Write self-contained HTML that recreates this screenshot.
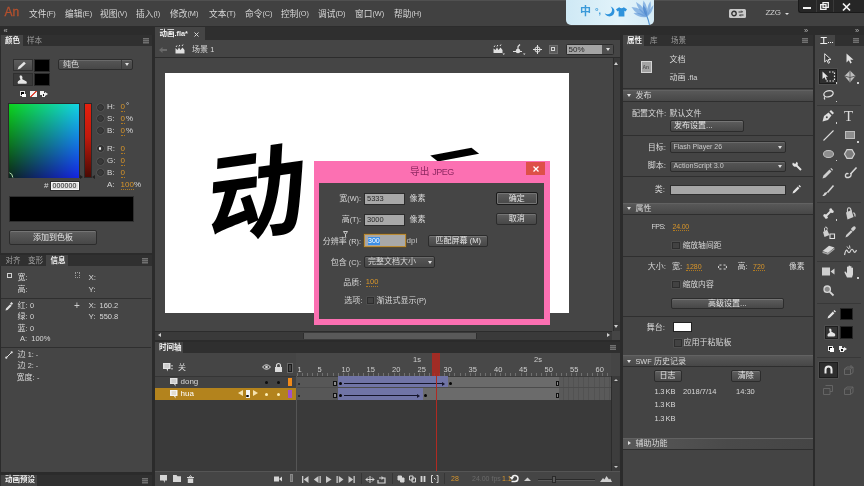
<!DOCTYPE html>
<html lang="zh-CN">
<head>
<meta charset="utf-8">
<title>Animate - 动画.fla</title>
<style>
*{box-sizing:border-box;margin:0;padding:0}
html,body{width:864px;height:486px;overflow:hidden;background:#2b2b2b}
body{position:relative;font-family:"Liberation Sans","Noto Sans CJK SC",sans-serif;font-size:9px;color:#dcdcdc;line-height:1}
.a{position:absolute}
.t{position:absolute;white-space:nowrap;line-height:12px;height:12px;font-size:8.7px;color:#d8d8d8}
.t i{font-style:normal;font-size:7.3px}
.or{color:#d9962a}
.ul{border-bottom:1px dotted #b07a22}
.pn{background:#454545}
.hd{position:absolute;left:622.5px;width:190.5px;height:12.2px;background:linear-gradient(#585858,#474747);border-top:1px solid #626262;border-bottom:1px solid #2e2e2e}
.sep{position:absolute;height:1px;background:#2f2f2f}
.btn{position:absolute;background:linear-gradient(#5e5e5e,#474747);border:1px solid #2c2c2c;border-radius:2px;box-shadow:inset 0 1px 0 #757575;text-align:center;color:#e4e4e4;font-size:8px;line-height:10px}
.sel{position:absolute;background:linear-gradient(#565656,#474747);border:1px solid #2c2c2c;border-radius:2px;box-shadow:inset 0 1px 0 #6a6a6a}
.chk{position:absolute;width:7.5px;height:7.5px;background:#424242;border:1px solid #2e2e2e;box-shadow:0 0 0 0.5px #585858}
.dn{position:absolute;width:0;height:0;border-left:3px solid transparent;border-right:3px solid transparent;border-top:4px solid #e0e0e0}
.rt{position:absolute;width:0;height:0;border-top:3px solid transparent;border-bottom:3px solid transparent;border-left:4px solid #e0e0e0}
.rad{position:absolute;width:7px;height:7px;border-radius:50%;background:#3a3a3a;border:1px solid #2c2c2c;box-shadow:0 0 0 0.5px #595959}
svg{position:absolute;overflow:visible}
</style>
</head>
<body>
<div id="root" style="position:absolute;left:0;top:0;width:864px;height:486px;will-change:transform">

<!-- ===== MENU BAR ===== -->
<div class="a" id="menubar" style="left:0;top:0;width:864px;height:25.5px;background:#414141;border-top:1px solid #505050"></div>
<div class="a" style="left:4.5px;top:5px;font-size:12px;line-height:14px;color:#b5502d;letter-spacing:0.1px;-webkit-text-stroke:0.3px #b5502d">An</div>
<div class="t" style="left:29px;top:7.5px">文件<i style="position:relative;top:-1px">(F)</i></div>
<div class="t" style="left:65px;top:7.5px">编辑<i style="position:relative;top:-1px">(E)</i></div>
<div class="t" style="left:100px;top:7.5px">视图<i style="position:relative;top:-1px">(V)</i></div>
<div class="t" style="left:136px;top:7.5px">插入<i style="position:relative;top:-1px">(I)</i></div>
<div class="t" style="left:170px;top:7.5px">修改<i style="position:relative;top:-1px">(M)</i></div>
<div class="t" style="left:209px;top:7.5px">文本<i style="position:relative;top:-1px">(T)</i></div>
<div class="t" style="left:245px;top:7.5px">命令<i style="position:relative;top:-1px">(C)</i></div>
<div class="t" style="left:281px;top:7.5px">控制<i style="position:relative;top:-1px">(O)</i></div>
<div class="t" style="left:318px;top:7.5px">调试<i style="position:relative;top:-1px">(D)</i></div>
<div class="t" style="left:355px;top:7.5px">窗口<i style="position:relative;top:-1px">(W)</i></div>
<div class="t" style="left:394px;top:7.5px">帮助<i style="position:relative;top:-1px">(H)</i></div>

<!-- IME floating bar -->
<div class="a" style="left:566px;top:0;width:88px;height:25px;background:linear-gradient(90deg,#cfe9f5,#e2f3fa 60%,#d5ebf6);border-radius:0 0 5px 5px;overflow:hidden">
  <div class="a" style="left:14px;top:5px;font-size:11px;line-height:12px;color:#3b9ad9;font-weight:bold">中</div>
  <div class="a" style="left:29px;top:6px;font-size:9px;line-height:10px;color:#3b9ad9;font-weight:bold">°,</div>
  <svg style="left:38px;top:6px" width="10" height="11" viewBox="0 0 10 11"><path d="M6.5 0.5A5 5 0 1 1 0.8 7.2A4 4 0 0 0 6.5 0.5z" fill="#2f93dc"/></svg>
  <svg style="left:50px;top:7px" width="11" height="10" viewBox="0 0 11 10"><path d="M0 2.2L3.2 0.3Q5.5 2 7.8 0.3L11 2.2L9.6 4.4L8.4 3.8V9.6H2.6V3.8L1.4 4.4z" fill="#2f93dc"/></svg>
  <svg style="left:64px;top:0" width="24" height="25" viewBox="0 0 24 25">
    <g fill="#5b93d6" fill-opacity="0.62">
      <path d="M17 17Q6 15 1.500 7Q12 7 17 17z"/>
      <path d="M17 17Q8 11 6 2Q15 7 17 17z"/>
      <path d="M17 17Q11 8 13.500 0.500Q19 8 17 17z"/>
      <path d="M17 17Q16 8 20.500 1Q22 9 17 17z"/>
      <path d="M17 17Q19 9 23.500 5Q23 12 17 17z"/>
      <path d="M17 17Q8 18 3.500 13Q11 12 17 17z"/>
      <path d="M17 17Q12 11 13 5Q18 10 17 17z" fill="#3f7cc8"/>
    </g>
    <path d="M17 16.500Q18.500 20 19.500 25" stroke="#4c8fd0" stroke-width="1.100" fill="none"/>
  </svg>
</div>
<!-- workspace switcher -->
<div class="a" style="left:729px;top:8.5px;width:17px;height:9px;background:#c9c9c9;border-radius:1.5px"></div>
<svg style="left:731px;top:9.5px" width="14" height="7" viewBox="0 0 14 7"><circle cx="3" cy="3.5" r="2.2" fill="none" stroke="#333" stroke-width="1.4"/><path d="M7.5 2h4l-1.2-1.3M12.5 5h-4l1.2 1.3" stroke="#333" stroke-width="1" fill="none"/></svg>
<div class="t" style="left:765.5px;top:7px;font-size:8px;color:#cfcfcf;letter-spacing:-0.3px">ZZG</div>
<div class="dn" style="left:785px;top:13px;border-left-width:2px;border-right-width:2px;border-top-width:2.5px"></div>
<!-- window controls -->
<div class="a" style="left:798px;top:0;width:66px;height:12.5px;background:#262626;border-radius:0 0 0 3px;border-left:1px solid #1a1a1a;border-bottom:1px solid #1a1a1a"></div>
<div class="a" style="left:815.5px;top:0;width:1px;height:11.5px;background:#3a3a3a"></div>
<div class="a" style="left:833px;top:0;width:1px;height:11.5px;background:#3a3a3a"></div>
<div class="a" style="left:803px;top:7px;width:8px;height:2px;background:#f2f2f2"></div>
<svg style="left:820px;top:2px" width="9" height="8" viewBox="0 0 9 8"><path d="M3 0.7h5.3v4.6H3z M0.7 2.7H6v4.6H0.7z" fill="none" stroke="#f2f2f2" stroke-width="1.3"/></svg>
<svg style="left:842px;top:2.5px" width="9" height="8" viewBox="0 0 9 8"><path d="M1 0.5l7 7M8 0.5l-7 7" stroke="#f4f4f4" stroke-width="1.7"/></svg>

<!-- ===== LEFT PANEL ===== -->
<div class="a" style="left:0;top:25.5px;width:864px;height:9px;background:#2c2c2c"></div>
<div class="a" style="left:3.500px;top:26.500px;font-size:7.500px;line-height:7px;color:#b8b8b8">«</div>
<div class="a" style="left:0;top:34.5px;width:152px;height:11px;background:#303030"></div>
<div class="a pn" style="left:1px;top:34.5px;width:22px;height:12px"></div>
<div class="t" style="left:5px;top:35px;font-size:7.5px;color:#f0f0f0;font-weight:bold">颜色</div>
<div class="t" style="left:27px;top:35px;font-size:7.5px;color:#9c9c9c">样本</div>
<div class="a" style="left:142.5px;top:38px;width:6px;height:5.500px;background:repeating-linear-gradient(#707070 0 1px,#505050 1px 2px)"></div>
<div class="a pn" style="left:1px;top:45.5px;width:151px;height:207px"></div>

<!-- stroke / fill -->
<div class="a" style="left:13px;top:59.2px;width:19.5px;height:12.3px;background:linear-gradient(#5d5d5d,#4a4a4a);border:1px solid #303030"></div>
<svg style="left:17px;top:61px" width="10" height="9" viewBox="0 0 10 9"><path d="M0.6 8.4l1-2.6L7 0.8l1.8 1.8L3.4 7.6z" fill="#e6e6e6"/></svg>
<div class="a" style="left:33.8px;top:59.2px;width:16.5px;height:12.5px;background:#000;border:1px solid #2a2a2a"></div>
<div class="a" style="left:13px;top:73.3px;width:19.5px;height:13px;background:#3a3a3a;border:1px solid #303030"></div>
<svg style="left:17px;top:75px" width="11" height="9" viewBox="0 0 11 9"><path d="M3 0.5C5.5-0.3 6 3 5 4L9.5 6.5Q10.5 8.8 8.5 8.8H1.2Q0 8.5 1 6.2L3.5 4.5C3 3 2 1.5 3 0.5z" fill="#e6e6e6"/></svg>
<div class="a" style="left:33.8px;top:73.3px;width:16.5px;height:13px;background:#000;border:1px solid #2a2a2a"></div>
<div class="a" style="left:19.5px;top:91px;width:5px;height:5px;background:#000;border:1px solid #e8e8e8"></div>
<div class="a" style="left:22px;top:93.5px;width:3.5px;height:3.5px;background:#fff"></div>
<div class="a" style="left:30px;top:90.5px;width:6.5px;height:6.5px;background:linear-gradient(135deg,#f4f4f4 43%,#e04a3a 43% 57%,#f4f4f4 57%)"></div>
<div class="a" style="left:40px;top:90.5px;width:3.5px;height:4px;background:#f2f2f2"></div>
<div class="a" style="left:41.5px;top:93px;width:3.5px;height:4px;background:#1a1a1a;border:0.5px solid #f2f2f2"></div>
<div class="rt" style="left:45px;top:91.5px;border-left-color:#f2f2f2;border-top-width:2.5px;border-bottom-width:2.5px;border-left-width:3px"></div>
<!-- select -->
<div class="sel" style="left:58.3px;top:58.7px;width:75px;height:11.8px"></div>
<div class="t" style="left:63px;top:58.800px;font-size:8px">纯色</div>
<div class="a" style="left:121px;top:59.5px;width:1px;height:9.5px;background:#3a3a3a"></div>
<div class="dn" style="left:124.5px;top:63px;border-left-width:2.5px;border-right-width:2.5px;border-top-width:3.5px"></div>

<!-- colour field -->
<div class="a" style="left:8px;top:103px;width:71.5px;height:75px;background:#2a2a2a"></div>
<div class="a" id="cf" style="left:8.5px;top:103.5px;width:70.5px;height:74px;background:linear-gradient(to right,rgb(12,0,28),rgb(20,0,228));"></div>
<div class="a" style="left:8.5px;top:103.5px;width:70.5px;height:74px;background:linear-gradient(to bottom,rgb(0,212,0),rgb(0,36,0));mix-blend-mode:screen"></div>
<svg style="left:9px;top:172px" width="5" height="6" viewBox="0 0 5 6"><path d="M0.5 0.8Q3.5 1.5 3.8 5.5" stroke="#b7e0b0" stroke-width="1" fill="none"/></svg>
<div class="a" style="left:84px;top:103px;width:7.5px;height:75px;border:1px solid #2a2a2a;background:linear-gradient(to bottom,#e6200e,#c01a0c 45%,#4a0a04)"></div>
<div class="rt" style="left:80px;top:174.5px;border-left-color:#222;border-top-width:2.5px;border-bottom-width:2.5px;border-left-width:3px"></div>
<div class="a" style="left:91.5px;top:174.5px;width:0;height:0;border-top:2.5px solid transparent;border-bottom:2.5px solid transparent;border-right:3px solid #222"></div>

<!-- HSB / RGB -->
<div class="rad" style="left:96.5px;top:103.5px"></div>
<div class="rad" style="left:96.5px;top:115px"></div>
<div class="rad" style="left:96.5px;top:127px"></div>
<div class="rad" style="left:96.5px;top:145px"></div>
<div class="a" style="left:98.7px;top:147.2px;width:2.6px;height:2.6px;border-radius:50%;background:#f0f0f0"></div>
<div class="rad" style="left:96.5px;top:157.5px"></div>
<div class="rad" style="left:96.5px;top:169px"></div>
<div class="t" style="left:107px;top:101px;font-size:8px">H:</div>
<div class="t" style="left:107px;top:113px;font-size:8px">S:</div>
<div class="t" style="left:107px;top:125px;font-size:8px">B:</div>
<div class="t" style="left:107px;top:143px;font-size:8px">R:</div>
<div class="t" style="left:107px;top:155px;font-size:8px">G:</div>
<div class="t" style="left:107px;top:166.5px;font-size:8px">B:</div>
<div class="t or" style="left:120.5px;top:101px;font-size:8px"><span class="ul">0</span></div>
<div class="t or" style="left:120.5px;top:113px;font-size:8px"><span class="ul">0</span></div>
<div class="t or" style="left:120.5px;top:125px;font-size:8px"><span class="ul">0</span></div>
<div class="t or" style="left:120.5px;top:143px;font-size:8px"><span class="ul">0</span></div>
<div class="t or" style="left:120.5px;top:155px;font-size:8px"><span class="ul">0</span></div>
<div class="t or" style="left:120.5px;top:166.5px;font-size:8px"><span class="ul">0</span></div>
<div class="t" style="left:126px;top:100px;font-size:8px">°</div>
<div class="t" style="left:126px;top:113px;font-size:8px">%</div>
<div class="t" style="left:126px;top:125px;font-size:8px">%</div>
<div class="t" style="left:107px;top:179px;font-size:8px">A:</div>
<div class="t or" style="left:120.5px;top:179px;font-size:8px"><span class="ul">100</span></div>
<div class="t" style="left:134px;top:179px;font-size:8px">%</div>
<div class="t" style="left:44px;top:179.5px;font-size:8px">#</div>
<div class="a" style="left:51px;top:182px;width:28px;height:8px;background:#dedede;border:1px solid #f5f5f5;outline:0.5px solid #2a2a2a"></div>
<div class="t" style="left:52.5px;top:180px;font-size:7px;color:#222;letter-spacing:0.1px">000000</div>

<div class="a" style="left:9px;top:195.5px;width:125px;height:26px;background:#000;border:1px solid #2e2e2e"></div>
<div class="btn" style="left:9px;top:230px;width:88px;height:15px;line-height:13px">添加到色板</div>

<!-- info panel -->
<div class="a" style="left:0;top:254.5px;width:152px;height:11px;background:#303030"></div>
<div class="a pn" style="left:46px;top:254.5px;width:21.5px;height:12px"></div>
<div class="t" style="left:5.5px;top:255px;font-size:7.5px;color:#a2a2a2">对齐</div>
<div class="t" style="left:28px;top:255px;font-size:7.5px;color:#a2a2a2">变形</div>
<div class="t" style="left:50.5px;top:255px;font-size:7.5px;color:#f0f0f0;font-weight:bold">信息</div>
<div class="a" style="left:142px;top:258px;width:6px;height:5.500px;background:repeating-linear-gradient(#707070 0 1px,#505050 1px 2px)"></div>
<div class="a pn" style="left:1px;top:265.5px;width:151px;height:206.5px"></div>
<div class="a" style="left:6.5px;top:272.5px;width:5px;height:5px;border:1px solid #d0d0d0"></div>
<div class="t" style="left:17.5px;top:271.5px;font-size:8px">宽:</div>
<div class="t" style="left:17.5px;top:283.5px;font-size:8px">高:</div>
<div class="a" style="left:74.5px;top:272px;width:5px;height:5.5px;border:1px dotted #9a9a9a"></div>
<div class="t" style="left:88.5px;top:271.5px;font-size:8px">X:</div>
<div class="t" style="left:88.5px;top:283.5px;font-size:8px">Y:</div>
<div class="sep" style="left:1px;top:298px;width:150px"></div>
<svg style="left:5px;top:301.5px" width="8" height="9" viewBox="0 0 8 9"><path d="M0.5 8.5L1 6.5L5.2 2.3L6.7 3.8L2.5 8z M5 1.5L6.5 0L8 1.5L6.8 3z" fill="#e0e0e0"/></svg>
<div class="t" style="left:17.5px;top:300px;font-size:8px">红: <i>0</i></div>
<div class="t" style="left:17.5px;top:311px;font-size:8px">绿: <i>0</i></div>
<div class="t" style="left:17.5px;top:323px;font-size:8px">蓝: <i>0</i></div>
<div class="t" style="left:20px;top:333px;font-size:7.5px">A:&nbsp; 100%</div>
<div class="t" style="left:74px;top:300px;font-size:10px;color:#cfcfcf">+</div>
<div class="t" style="left:88.5px;top:300px;font-size:8px">X:</div>
<div class="t" style="left:99.5px;top:300px;font-size:7.5px">160.2</div>
<div class="t" style="left:88.5px;top:311px;font-size:8px">Y:</div>
<div class="t" style="left:99.5px;top:311px;font-size:7.5px">550.8</div>
<div class="sep" style="left:1px;top:347px;width:150px"></div>
<svg style="left:5px;top:350.5px" width="8" height="8" viewBox="0 0 8 8"><path d="M1 7L7 1" stroke="#e0e0e0" stroke-width="1"/><circle cx="1.3" cy="6.7" r="1.1" fill="#e0e0e0"/><circle cx="6.7" cy="1.3" r="1.1" fill="#e0e0e0"/></svg>
<div class="t" style="left:17.5px;top:349px;font-size:8px">边 <i>1: -</i></div>
<div class="t" style="left:17.5px;top:360px;font-size:8px">边 <i>2: -</i></div>
<div class="t" style="left:16.5px;top:371.5px;font-size:8px">宽度: <i>-</i></div>

<div class="a" style="left:0;top:474.5px;width:152px;height:11.5px;background:#303030"></div>
<div class="a pn" style="left:1px;top:474.5px;width:35.5px;height:11.5px"></div>
<div class="t" style="left:5px;top:474px;font-size:7.5px;color:#f0f0f0;font-weight:bold">动画预设</div>
<div class="a" style="left:142px;top:478px;width:6px;height:5.500px;background:repeating-linear-gradient(#707070 0 1px,#505050 1px 2px)"></div>

<!-- ===== DOCUMENT AREA ===== -->
<div class="a" style="left:155px;top:27px;width:465px;height:12.5px;background:#2f2f2f"></div>
<div class="a pn" style="left:155px;top:27px;width:49.5px;height:13px"></div>
<div class="t" style="left:159.5px;top:28px;font-size:7.5px;color:#f2f2f2;font-weight:bold">动画<i>.fla*</i></div>
<svg style="left:193.5px;top:31.5px" width="5" height="5" viewBox="0 0 5 5"><path d="M0.5 0.5l4 4M4.5 0.5l-4 4" stroke="#d8d8d8" stroke-width="1"/></svg>
<div class="a pn" style="left:155px;top:39.5px;width:465px;height:17.5px"></div>
<svg style="left:158.5px;top:47px" width="8" height="6" viewBox="0 0 8 6"><path d="M0 3L3.5 0V2H8V4H3.5V6z" fill="#6a6a6a"/></svg>
<svg style="left:175px;top:44px" width="10" height="10" viewBox="0 0 10 10"><path d="M0.5 9.5V4l2 2 1.5-2.5L5.5 6 7.5 3.5 9.5 6V9.5z" fill="#e0e0e0"/><path d="M1 3l1-1.5M4 2.5l0.8-1.5M7 2l1-1.5" stroke="#e0e0e0" stroke-width="1"/></svg>
<div class="t" style="left:192px;top:44px;font-size:8px">场景 <i>1</i></div>
<!-- right icons -->
<svg style="left:492.5px;top:43.5px" width="12" height="11" viewBox="0 0 12 11"><path d="M0.5 9V4.5l2 1.5 1.5-2.5L5.5 6 7.5 3.5 9.5 6V9z" fill="#e0e0e0"/><path d="M1 3l1-1.5M4 2.5l0.8-1.5M7 2l1-1.5" stroke="#e0e0e0" stroke-width="1"/><path d="M9.5 9.5h2.5l-1.25 1.5z" fill="#e0e0e0"/></svg>
<svg style="left:512.5px;top:43.5px" width="13" height="11" viewBox="0 0 13 11"><path d="M0 7.5h9M5 7.5V2.5L7 0.5" stroke="#e0e0e0" stroke-width="1.2" fill="none"/><circle cx="5" cy="7" r="2.3" fill="#e0e0e0"/><path d="M10 9.5h2.5l-1.25 1.5z" fill="#e0e0e0"/></svg>
<svg style="left:533px;top:44.5px" width="9" height="9" viewBox="0 0 9 9"><circle cx="4.5" cy="4.5" r="2.6" fill="none" stroke="#e0e0e0" stroke-width="1"/><path d="M4.5 0v9M0 4.5h9" stroke="#e0e0e0" stroke-width="1"/></svg>
<div class="a" style="left:548.5px;top:44.5px;width:9px;height:9px;background:#5a5a5a;border:1px solid #6e6e6e"></div>
<div class="a" style="left:551px;top:47px;width:4px;height:4px;border:1px solid #d6d6d6"></div>
<div class="a" style="left:566px;top:44px;width:48px;height:10.5px;background:#4e4e4e;border:1px solid #2c2c2c;border-radius:1.5px"></div>
<div class="a" style="left:567px;top:45px;width:35px;height:8.5px;background:#a4a4a4"></div>
<div class="t" style="left:568.5px;top:43.5px;font-size:8px;color:#2a2a2a">50%</div>
<div class="dn" style="left:605.5px;top:47.5px;border-left-width:2.5px;border-right-width:2.5px;border-top-width:3.5px"></div>

<!-- pasteboard -->
<div class="a" style="left:155px;top:57px;width:465px;height:1px;background:#2c2c2c"></div>
<div class="a" style="left:155px;top:58px;width:457.5px;height:273px;background:#454545"></div>
<div class="a" id="stage" style="left:164.5px;top:73px;width:404px;height:239.5px;background:#fff"></div>
<div class="a" id="dong" style="left:205px;top:135.5px;width:104px;height:120px;font-family:'Liberation Sans','Noto Sans CJK SC',sans-serif;font-weight:700;font-size:93px;line-height:120px;color:#000;text-align:center;transform:matrix(1.06,-0.148,-0.05,1.09,0,0);transform-origin:50% 50%">动</div>
<div class="a" style="left:400px;top:73px;width:168.5px;height:88.4px;overflow:hidden;clip-path:polygon(0 0,168.5px 0,168.5px 64.6px,0 96.3px)"><div class="a" id="hua" style="left:23.4px;top:80.2px;width:47px;height:47px;font-family:'Liberation Sans','Noto Sans CJK SC',sans-serif;font-weight:700;font-size:47px;line-height:47px;color:#000;transform:matrix(1,-0.188,1.46,1.1,0,0);transform-origin:0 0">画</div></div>

<!-- v scrollbar -->
<div class="a" style="left:612.5px;top:58px;width:7.5px;height:273px;background:#3a3a3a;border-left:1px solid #2c2c2c"></div>
<div class="a" style="left:613.5px;top:67px;width:6px;height:255px;background:#3d3d3d"></div>
<div class="a" style="left:614px;top:61.5px;width:0;height:0;border-left:2.2px solid transparent;border-right:2.2px solid transparent;border-bottom:3px solid #d0d0d0"></div>
<div class="a" style="left:614px;top:325px;width:0;height:0;border-left:2.2px solid transparent;border-right:2.2px solid transparent;border-top:3px solid #d0d0d0"></div>
<!-- h scrollbar -->
<div class="a" style="left:155px;top:331px;width:465px;height:8.5px;background:#3a3a3a;border-top:1px solid #2c2c2c"></div>
<div class="a" style="left:303px;top:332.5px;width:174px;height:6px;background:#595959;border:1px solid #2e2e2e;border-width:0 1px"></div>
<div class="a" style="left:157.5px;top:333.2px;width:0;height:0;border-top:2.2px solid transparent;border-bottom:2.2px solid transparent;border-right:3px solid #d0d0d0"></div>
<div class="a" style="left:607px;top:333.2px;width:0;height:0;border-top:2.2px solid transparent;border-bottom:2.2px solid transparent;border-left:3px solid #d0d0d0"></div>
<div class="a pn" style="left:612px;top:331px;width:8px;height:8.5px"></div>

<!-- ===== TIMELINE ===== -->
<div class="a" style="left:155px;top:341.5px;width:465px;height:11px;background:#2f2f2f"></div>
<div class="a pn" style="left:155px;top:341.5px;width:27.5px;height:11.5px"></div>
<div class="t" style="left:159px;top:341.8px;font-size:7.5px;color:#f0f0f0;font-weight:bold">时间轴</div>
<div class="a" style="left:610px;top:344.5px;width:6px;height:5px;background:repeating-linear-gradient(#707070 0 1px,#505050 1px 2px)"></div>
<!-- layer header + rows -->
<div class="a pn" style="left:155px;top:352.5px;width:141px;height:23.5px"></div>
<div class="a" style="left:155px;top:376px;width:141px;height:11.5px;background:#424242;border-top:1px solid #353535"></div>
<div class="a" style="left:155px;top:387.5px;width:141px;height:12px;background:#b3831d"></div>
<div class="a" style="left:155px;top:399.5px;width:141px;height:71px;background:#3a3a3a"></div>
<!-- header icons -->
<svg style="left:162.5px;top:363.300px" width="11" height="10" viewBox="0 0 11 10"><path d="M0 0h7.5v6H5V8.500L3.5 6H0z" fill="#e2e2e2"/><path d="M9 2v1.500M9 5v1.500" stroke="#dadada" stroke-width="1.200"/><path d="M1.500 2h4.500M1.500 4h4.500" stroke="#8c8c8c" stroke-width="0.500"/></svg>
<div class="t" style="left:178px;top:362px;font-size:8px">关</div>
<svg style="left:261.5px;top:363.5px" width="9" height="6" viewBox="0 0 9 6"><path d="M0.5 3Q4.5-1.5 8.500 3Q4.5 7.500 0.5 3z" fill="none" stroke="#dadada" stroke-width="1"/><circle cx="4.5" cy="3" r="1.3" fill="#dadada"/></svg>
<svg style="left:274.5px;top:362.800px" width="7" height="9" viewBox="0 0 7 9"><rect x="0" y="4" width="7" height="5" fill="#dadada"/><path d="M1.5 4V2.5a2 2 0 0 1 4 0V4" fill="none" stroke="#dadada" stroke-width="1.2"/></svg>
<div class="a" style="left:288px;top:364px;width:3.5px;height:7.5px;border:1px solid #1c1c1c;outline:0.5px solid #666"></div>
<!-- dong row -->
<svg style="left:170px;top:377.5px" width="8" height="9" viewBox="0 0 8 9"><path d="M0 0h7.500v6H5.500V8.500L4 6H0z" fill="#e2e2e2"/><path d="M1.500 2h4.500M1.500 4h4.500" stroke="#8c8c8c" stroke-width="0.500"/></svg>
<div class="t" style="left:180.5px;top:376px;font-size:8px">dong</div>
<div class="a" style="left:264.5px;top:380.5px;width:3px;height:3px;border-radius:50%;background:#0d0d0d"></div>
<div class="a" style="left:276.5px;top:380.5px;width:3px;height:3px;border-radius:50%;background:#0d0d0d"></div>
<div class="a" style="left:288px;top:378px;width:3.5px;height:7.5px;background:#f08a1a"></div>
<!-- hua row -->
<svg style="left:170px;top:389.5px" width="8" height="9" viewBox="0 0 8 9"><path d="M0 0h7.500v6H5.500V8.500L4 6H0z" fill="#f4f4f4"/><path d="M1.500 2h4.500M1.500 4h4.500" stroke="#b09a60" stroke-width="0.500"/></svg>
<div class="t" style="left:180.5px;top:388px;font-size:8px;color:#fff">hua</div>
<div class="a" style="left:237.5px;top:390.3px;width:0;height:0;border-top:3.4px solid transparent;border-bottom:3.4px solid transparent;border-right:5px solid #f6e3b0"></div>
<div class="a" style="left:245.5px;top:390px;width:4px;height:8px;background:#f4f4f4"></div>
<div class="a" style="left:246.3px;top:394.5px;width:2.4px;height:2.4px;border-radius:50%;background:#111"></div>
<div class="a" style="left:252.5px;top:390.3px;width:0;height:0;border-top:3.4px solid transparent;border-bottom:3.4px solid transparent;border-left:5px solid #f6e3b0"></div>
<div class="a" style="left:264.5px;top:392.5px;width:3px;height:3px;border-radius:50%;background:#fdf0b8"></div>
<div class="a" style="left:276.5px;top:392.5px;width:3px;height:3px;border-radius:50%;background:#fdf0b8"></div>
<div class="a" style="left:288px;top:390px;width:3.5px;height:7.5px;background:#a052c8"></div>

<!-- frames -->
<div class="a" style="left:296px;top:352.5px;width:315px;height:23px;background:#484848"></div>
<div class="a" id="ticks" style="left:296.5px;top:373px;width:314px;height:2.5px;background:repeating-linear-gradient(90deg,#707070 0 1px,transparent 1px 5.08px)"></div>
<div class="a" style="left:296px;top:375.5px;width:315px;height:24px;background:#5a5a5a"></div>
<div class="a" style="left:296px;top:375.5px;width:262.5px;height:24px;background:#6b6b6b"></div>
<div class="a" style="left:296px;top:375.5px;width:41.500px;height:24px;background:#575757"></div>
<div class="a" style="left:558.5px;top:375.5px;width:52.5px;height:24px;background:repeating-linear-gradient(90deg,transparent 0 4.08px,#525252 4.08px 5.08px)"></div>
<div class="a" style="left:296px;top:387px;width:315px;height:1px;background:#4c4c4c"></div>
<div class="a" style="left:296px;top:375.5px;width:315px;height:0.8px;background:#3c3c3c"></div>
<div class="a" style="left:296px;top:399.5px;width:315px;height:71px;background:#3a3a3a"></div>
<!-- tweens -->
<div class="a" style="left:337.5px;top:376px;width:110px;height:11px;background:#7074a6"></div>
<div class="a" style="left:337.5px;top:388px;width:85.5px;height:11.5px;background:#7074a6"></div>
<div class="a" style="left:344px;top:383.2px;width:99px;height:1px;background:#15152a"></div>
<div class="a" style="left:442px;top:381.7px;width:0;height:0;border-top:2px solid transparent;border-bottom:2px solid transparent;border-left:3px solid #15152a"></div>
<div class="a" style="left:344px;top:395.3px;width:74px;height:1px;background:#15152a"></div>
<div class="a" style="left:417px;top:393.800px;width:0;height:0;border-top:2px solid transparent;border-bottom:2px solid transparent;border-left:3px solid #15152a"></div>
<!-- keyframes -->
<div class="a" style="left:297.6px;top:382.5px;width:2.6px;height:2.6px;border-radius:50%;border:0.7px solid #111"></div>
<div class="a" style="left:297.6px;top:394.500px;width:2.6px;height:2.6px;border-radius:50%;border:0.7px solid #111"></div>
<div class="a" style="left:333px;top:380.500px;width:3.6px;height:5.5px;border:0.9px solid #111;background:#8a8a8a"></div>
<div class="a" style="left:333px;top:392.500px;width:3.6px;height:5.5px;border:0.9px solid #111;background:#8a8a8a"></div>
<div class="a" style="left:338.5px;top:382.2px;width:3px;height:3px;border-radius:50%;background:#050505"></div>
<div class="a" style="left:338.5px;top:394.300px;width:3px;height:3px;border-radius:50%;background:#050505"></div>
<div class="a" style="left:449.3px;top:382.2px;width:3px;height:3px;border-radius:50%;background:#050505"></div>
<div class="a" style="left:424px;top:394.300px;width:3px;height:3px;border-radius:50%;background:#050505"></div>
<div class="a" style="left:555.5px;top:380.500px;width:3.6px;height:5.5px;border:0.9px solid #111;background:#8a8a8a"></div>
<div class="a" style="left:555.5px;top:392.500px;width:3.6px;height:5.5px;border:0.9px solid #111;background:#8a8a8a"></div>
<!-- frame numbers -->
<div class="t fn" style="left:297.5px;top:364px;font-size:7.5px;color:#cfcfcf">1</div>
<div class="t fn" style="left:317.5px;top:364px;font-size:7.5px;color:#cfcfcf">5</div>
<div class="t fn" style="left:341.5px;top:364px;font-size:7.5px;color:#cfcfcf">10</div>
<div class="t fn" style="left:366.5px;top:364px;font-size:7.5px;color:#cfcfcf">15</div>
<div class="t fn" style="left:392px;top:364px;font-size:7.5px;color:#cfcfcf">20</div>
<div class="t fn" style="left:417.5px;top:364px;font-size:7.5px;color:#cfcfcf">25</div>
<div class="t fn" style="left:443.5px;top:364px;font-size:7.5px;color:#cfcfcf">30</div>
<div class="t fn" style="left:468.5px;top:364px;font-size:7.5px;color:#cfcfcf">35</div>
<div class="t fn" style="left:494px;top:364px;font-size:7.5px;color:#cfcfcf">40</div>
<div class="t fn" style="left:519px;top:364px;font-size:7.5px;color:#cfcfcf">45</div>
<div class="t fn" style="left:544.5px;top:364px;font-size:7.5px;color:#cfcfcf">50</div>
<div class="t fn" style="left:570px;top:364px;font-size:7.5px;color:#cfcfcf">55</div>
<div class="t fn" style="left:595.5px;top:364px;font-size:7.5px;color:#cfcfcf">60</div>
<div class="t" style="left:413px;top:353.5px;font-size:7.5px;color:#cfcfcf">1s</div>
<div class="t" style="left:534px;top:353.5px;font-size:7.5px;color:#cfcfcf">2s</div>
<!-- playhead -->
<div class="a" style="left:432px;top:352.5px;width:8px;height:23px;background:rgba(176,40,32,0.85)"></div>
<div class="a" style="left:435.6px;top:375.5px;width:1px;height:95px;background:#b02a22"></div>
<!-- v divider + scrollbar -->
<div class="a" style="left:295.5px;top:375.5px;width:1px;height:110px;background:#555"></div>
<div class="a" style="left:611px;top:375.5px;width:9px;height:95px;background:#3a3a3a;border-left:1px solid #2c2c2c"></div>
<div class="a" style="left:612px;top:383px;width:7px;height:80px;background:#3d3d3d"></div>
<div class="a" style="left:613.5px;top:378.5px;width:0;height:0;border-left:2px solid transparent;border-right:2px solid transparent;border-bottom:2.6px solid #c8c8c8"></div>
<div class="a" style="left:613.5px;top:465.5px;width:0;height:0;border-left:2px solid transparent;border-right:2px solid transparent;border-top:2.6px solid #c8c8c8"></div>
<div class="a pn" style="left:611px;top:352.5px;width:9px;height:23px"></div>

<!-- bottom toolbar -->
<div class="a pn" style="left:155px;top:470.5px;width:465px;height:15.500px;border-top:1px solid #555"></div>
<svg style="left:160px;top:475px" width="7" height="8" viewBox="0 0 7 8"><path d="M0 0h7v5.5H4.800V8L3.500 5.500H0z" fill="#d6d6d6"/></svg>
<svg style="left:173px;top:475px" width="8" height="7" viewBox="0 0 8 7"><path d="M0 0h3.500l1 1.300H8V7H0z" fill="#d6d6d6"/></svg>
<svg style="left:186.500px;top:474.500px" width="7" height="8" viewBox="0 0 7 8"><path d="M0 2.500h7M2 2.500L3.500 0.500 5 2.500" stroke="#d6d6d6" stroke-width="1" fill="none"/><path d="M0.800 3.500h5.400v4.500H0.800z" fill="#d6d6d6"/></svg>
<svg style="left:273.500px;top:475.500px" width="8" height="6" viewBox="0 0 8 6"><path d="M0 0.500h5v5H0z M5 3L8 0.500v5z" fill="#d6d6d6"/></svg>
<div class="a" style="left:289.500px;top:474px;width:3px;height:8px;background:#6e6e6e;border:0.5px solid #888"></div>
<svg style="left:302px;top:475.500px" width="84" height="7" viewBox="0 0 84 7" fill="#c8c8c8">
 <path d="M0 0h1.300v7H0z M6.500 0v7L1.800 3.500z"/>
 <path d="M16.500 0v7L11.800 3.500z M17.500 0h1.300v7h-1.300z"/>
 <path d="M24 0l5.500 3.500L24 7z"/>
 <path d="M34.500 0h1.300v7h-1.300z M36.800 0l4.700 3.500-4.700 3.500z"/>
 <path d="M46.500 0l4.700 3.500-4.700 3.500z M51.500 0h1.300v7h-1.300z"/>
 <path d="M64 3.500h8M68 0v7M66 1.500l-2 2 2 2M70 1.500l2 2-2 2" stroke="#d6d6d6" stroke-width="1" fill="none"/>
 <path d="M77 2h6v5h-7V4" stroke="#d6d6d6" stroke-width="1.200" fill="none"/><path d="M79.500 0l2.500 2-2.500 2z"/>
</svg>
<div class="a" style="left:391.500px;top:473px;width:1px;height:11px;background:#363636"></div><div class="a" style="left:360.500px;top:473px;width:1px;height:11px;background:#363636"></div><div class="a" style="left:444px;top:473px;width:1px;height:11px;background:#363636"></div>
<svg style="left:397px;top:474.500px" width="42" height="8" viewBox="0 0 42 8" fill="none" stroke="#d6d6d6" stroke-width="1">
 <path d="M1 1h3.500v4H1z" fill="#d6d6d6"/><path d="M3.500 3h3.500v4H3.500z" fill="#d6d6d6"/>
 <path d="M12.500 1h3.500v4h-3.500z M15 3h3.500v4H15z"/>
 <path d="M24.500 1v6M27.500 1v6" stroke-width="1.800"/>
 <path d="M36 0.500h-1.500v7H36 M39.500 0.500H41v7h-1.500 M37 3l1.500 1.500"/>
</svg>
<div class="t or" style="left:451px;top:472.500px;font-size:7px">28</div>
<div class="t" style="left:472px;top:472.500px;font-size:7px;color:#6a6a6a">24.00 fps</div>
<div class="t or" style="left:502px;top:472.500px;font-size:7px">1.1</div>
<svg style="left:509px;top:473px" width="10" height="10" viewBox="0 0 10 10"><path d="M2.500 8.500h3.500a3 3 0 1 0-3-3.500" fill="none" stroke="#f0f0f0" stroke-width="1.500"/><path d="M0.500 4l2.500 3 2-3z" fill="#f0f0f0"/></svg>
<svg style="left:524px;top:477px" width="7" height="4" viewBox="0 0 7 4"><path d="M0 4L3.500 0.500 7 4z" fill="#cfcfcf"/></svg>
<div class="a" style="left:537.500px;top:478.500px;width:57px;height:2px;background:#2a2a2a;border-bottom:0.500px solid #5a5a5a"></div>
<div class="a" style="left:552px;top:476px;width:3.500px;height:7px;background:#5c5c5c;border:0.500px solid #2a2a2a"></div>
<svg style="left:600px;top:475.500px" width="12" height="6" viewBox="0 0 12 6"><path d="M0 6L3 2l1.500 1.500L6.500 0 9 3.500 10.200 2.500 12 6z" fill="#cfcfcf"/></svg>

<!-- ===== PROPERTIES PANEL ===== -->
<div class="a" style="left:804px;top:26.500px;font-size:7.500px;line-height:7px;color:#b8b8b8">»</div>
<div class="a" style="left:622.5px;top:34.5px;width:190.5px;height:11px;background:#303030"></div>
<div class="a pn" style="left:622.5px;top:34.5px;width:21.5px;height:12px"></div>
<div class="t" style="left:627px;top:35px;font-size:7.5px;color:#f0f0f0;font-weight:bold">属性</div>
<div class="t" style="left:650px;top:35px;font-size:7.5px;color:#9c9c9c">库</div>
<div class="t" style="left:671px;top:35px;font-size:7.5px;color:#9c9c9c">场景</div>
<div class="a" style="left:802px;top:37.5px;width:6px;height:5px;background:repeating-linear-gradient(#707070 0 1px,#505050 1px 2px)"></div>
<div class="a" style="left:622.5px;top:45.5px;width:190.5px;height:440.5px;background:#444444"></div>
<!-- doc -->
<div class="a" style="left:640.5px;top:61px;width:11.500px;height:11.500px;background:#a2a2a2;border:1px solid #d4d4d4"></div>
<div class="t" style="left:642.5px;top:61px;font-size:5px;color:#555;font-weight:bold">An</div>
<div class="t" style="left:669.5px;top:53.5px;font-size:8px">文档</div>
<div class="t" style="left:669.5px;top:71.500px;font-size:8px">动画<i> .fla</i></div>
<div class="sep" style="left:622.5px;top:87.500px;width:190.5px"></div>
<!-- publish -->
<div class="hd" style="top:89.5px"></div>
<div class="dn" style="left:626.500px;top:93.500px;border-left-width:2.800px;border-right-width:2.800px;border-top-width:3.500px"></div>
<div class="t" style="left:635.5px;top:90px;font-size:8px">发布</div>
<div class="t" style="left:632px;top:107.8px;font-size:8px">配置文件:</div>
<div class="t" style="left:669.5px;top:107.8px;font-size:8px">默认文件</div>
<div class="btn" style="left:670px;top:120px;width:74px;height:11.500px;text-align:left;padding-left:3px;font-size:8px;line-height:9.500px">发布设置...</div>
<div class="sep" style="left:622.5px;top:135px;width:190.5px"></div>
<div class="t" style="left:641px;top:141.500px;font-size:8px;width:25px;text-align:right">目标:</div>
<div class="sel" style="left:670px;top:141px;width:115.500px;height:11.500px"></div>
<div class="t" style="left:673.500px;top:140.500px;font-size:7px;color:#cacaca">Flash Player 26</div>
<div class="dn" style="left:777.500px;top:145.500px;border-left-width:2.500px;border-right-width:2.500px;border-top-width:3.500px"></div>
<div class="t" style="left:641px;top:160.300px;font-size:8px;width:25px;text-align:right">脚本:</div>
<div class="sel" style="left:670px;top:160.500px;width:115.500px;height:11.500px"></div>
<div class="t" style="left:673.500px;top:160px;font-size:7.2px;color:#cacaca">ActionScript 3.0</div>
<div class="dn" style="left:777.500px;top:165px;border-left-width:2.500px;border-right-width:2.500px;border-top-width:3.500px"></div>
<svg style="left:791.500px;top:161px" width="10" height="10" viewBox="0 0 10 10"><path d="M9 9L4.500 4.500" stroke="#e4e4e4" stroke-width="2"/><path d="M1 1.500A2.600 2.600 0 1 0 4.500 0.800L3.600 2.800 2 2.600z" fill="#e4e4e4"/></svg>
<div class="sep" style="left:622.5px;top:176px;width:190.5px"></div>
<div class="t" style="left:640px;top:183.500px;font-size:8px;width:25px;text-align:right">类:</div>
<div class="a" style="left:670px;top:184.500px;width:115.500px;height:10.500px;background:#a6a6a6;border:1px solid #2e2e2e"></div>
<svg style="left:792px;top:185px" width="9" height="9" viewBox="0 0 9 9"><path d="M0.500 8.500L1.200 6.200 5.800 1.600 7.400 3.200 2.800 7.800z M6.400 1L7.400 0 9 1.600 8 2.600z" fill="#e4e4e4"/></svg>
<!-- properties -->
<div class="hd" style="top:202.5px"></div>
<div class="dn" style="left:626.500px;top:207px;border-left-width:2.800px;border-right-width:2.800px;border-top-width:3.500px"></div>
<div class="t" style="left:635.5px;top:203.300px;font-size:8px">属性</div>
<div class="t" style="left:640px;top:221px;font-size:7px;letter-spacing:-0.5px;width:25px;text-align:right">FPS:</div>
<div class="t or" style="left:672.5px;top:220.500px;font-size:7px;letter-spacing:-0.2px"><span class="ul">24.00</span></div>
<div class="chk" style="left:672px;top:241.500px"></div>
<div class="t" style="left:682.5px;top:240px;font-size:7.8px">缩放轴间距</div>
<div class="sep" style="left:622.5px;top:256px;width:190.5px"></div>
<div class="t" style="left:641px;top:261.300px;font-size:8px;width:25px;text-align:right">大小:</div>
<div class="t" style="left:672px;top:261.300px;font-size:8px">宽:</div>
<div class="t or" style="left:686px;top:260.800px;font-size:7px"><span class="ul">1280</span></div>
<svg style="left:718px;top:263.500px" width="9" height="6" viewBox="0 0 9 6"><path d="M3.500 1H2.500a2 2 0 0 0 0 4H3.500M5.500 1H6.500a2 2 0 0 1 0 4H5.500" fill="none" stroke="#d6d6d6" stroke-width="1.100" stroke-dasharray="2 0.800"/></svg>
<div class="t" style="left:737.5px;top:261.300px;font-size:8px">高:</div>
<div class="t or" style="left:753px;top:260.800px;font-size:7px"><span class="ul">720</span></div>
<div class="t" style="left:789px;top:261.300px;font-size:7.800px">像素</div>
<div class="chk" style="left:672px;top:280.500px"></div>
<div class="t" style="left:682.5px;top:279px;font-size:7.8px">缩放内容</div>
<div class="btn" style="left:671px;top:297.5px;width:112.500px;height:11.500px;font-size:8px;line-height:9.500px">高级设置...</div>
<div class="sep" style="left:622.5px;top:316px;width:190.5px"></div>
<div class="t" style="left:640px;top:321.500px;font-size:8px;width:25px;text-align:right">舞台:</div>
<div class="a" style="left:673px;top:322px;width:18.500px;height:10px;background:#fff;border:1px solid #222"></div>
<div class="chk" style="left:674px;top:339px"></div>
<div class="t" style="left:683.5px;top:337px;font-size:8px">应用于粘贴板</div>
<!-- swf history -->
<div class="hd" style="top:355px"></div>
<div class="dn" style="left:626.500px;top:359.500px;border-left-width:2.800px;border-right-width:2.800px;border-top-width:3.500px"></div>
<div class="t" style="left:635.5px;top:355.5px;font-size:8px"><i>SWF</i> 历史记录</div>
<div class="btn" style="left:653.5px;top:370px;width:28px;height:11.500px;font-size:8px;line-height:9.500px">日志</div>
<div class="btn" style="left:730.5px;top:370px;width:30.500px;height:11.500px;font-size:8px;line-height:9.500px">清除</div>
<div class="t" style="left:654.5px;top:385.500px;font-size:7.500px;word-spacing:-0.6px;letter-spacing:-0.2px">1.3 KB</div>
<div class="t" style="left:683px;top:385.500px;font-size:7.500px">2018/7/14</div>
<div class="t" style="left:736px;top:385.500px;font-size:7.500px">14:30</div>
<div class="t" style="left:654.5px;top:399px;font-size:7.500px;word-spacing:-0.6px;letter-spacing:-0.2px">1.3 KB</div>
<div class="t" style="left:654.5px;top:412.500px;font-size:7.500px;word-spacing:-0.6px;letter-spacing:-0.2px">1.3 KB</div>
<!-- accessibility -->
<div class="hd" style="top:437.5px;background:linear-gradient(90deg,#595959,#4a4a4a 55%,#454545)"></div>
<div class="rt" style="left:628px;top:440.500px;border-top-width:2.800px;border-bottom-width:2.800px;border-left-width:3.500px"></div>
<div class="t" style="left:635.5px;top:438px;font-size:8px">辅助功能</div>

<!-- ===== TOOLS PANEL ===== -->
<div class="a" style="left:855px;top:26.500px;font-size:7.500px;line-height:7px;color:#b8b8b8">»</div>
<div class="a" style="left:815px;top:34.5px;width:49px;height:11px;background:#303030"></div>
<div class="a pn" style="left:815px;top:34.5px;width:20px;height:12px"></div>
<div class="t" style="left:820px;top:34.500px;font-size:7.5px;color:#f0f0f0;font-weight:bold">工<i>...</i></div>
<div class="a" style="left:853px;top:37.5px;width:6px;height:5px;background:repeating-linear-gradient(#707070 0 1px,#505050 1px 2px)"></div>
<div class="a" style="left:815px;top:45.5px;width:49px;height:440.5px;background:#454545"></div>
<div class="sep" style="left:817px;top:105px;width:44px;background:#383838"></div>
<div class="sep" style="left:817px;top:201.5px;width:44px;background:#383838"></div>
<div class="sep" style="left:817px;top:260.5px;width:44px;background:#383838"></div>
<div class="sep" style="left:817px;top:302.5px;width:44px;background:#383838"></div>
<div class="sep" style="left:817px;top:356.5px;width:44px;background:#383838"></div>
<!-- row1: subselect / select -->
<svg style="left:823.500px;top:52.500px" width="8" height="11" viewBox="0 0 8 11"><path d="M0.700 0.700V9L2.800 7 4.300 10.300 5.600 9.700 4.200 6.500H7z" fill="#3a3a3a" stroke="#e0e0e0" stroke-width="1"/></svg>
<svg style="left:846px;top:52.500px" width="8" height="11" viewBox="0 0 8 11"><path d="M0.500 0.500V9.500L2.800 7.300 4.300 10.500 5.800 9.800 4.300 6.700H7.500z" fill="#e0e0e0"/></svg>
<!-- row2: free transform (selected) / 3d -->
<div class="a" style="left:818.500px;top:68.500px;width:18.500px;height:15px;background:#2e2e2e;border:1px solid #1c1c1c;box-shadow:0 0 0 0.500px #5a5a5a"></div>
<svg style="left:821.500px;top:70.500px" width="13" height="11" viewBox="0 0 13 11"><path d="M0.500 0.500V8L2.500 6.200 3.800 9 5 8.400 3.800 5.700H6z" fill="#e6e6e6"/><path d="M7 1h5.500v9H3" fill="none" stroke="#e6e6e6" stroke-width="1.200" stroke-dasharray="1.600 1.400"/></svg>
<div class="a" style="left:835.500px;top:82px;width:1.500px;height:1.500px;background:#cfcfcf"></div>
<svg style="left:843.500px;top:69.500px" width="12" height="13" viewBox="0 0 12 13"><path d="M6 0.500L11.500 6 6 12.500 0.500 6z" fill="#bdbdbd"/><path d="M0.500 6Q6 9 11.500 6M6 0.500V12.500" stroke="#555" stroke-width="0.900" fill="none"/></svg>
<div class="a" style="left:857px;top:82px;width:1.500px;height:1.500px;background:#cfcfcf"></div>
<!-- row3: lasso -->
<svg style="left:822px;top:89.500px" width="12" height="10" viewBox="0 0 12 10"><ellipse cx="6.500" cy="3.800" rx="4.800" ry="3" fill="none" stroke="#dcdcdc" stroke-width="1.300" transform="rotate(-15 6.500 3.800)"/><path d="M2.800 6.500Q1.500 8 3 9.500" stroke="#dcdcdc" stroke-width="1.100" fill="none"/></svg>
<div class="a" style="left:835.500px;top:100.500px;width:1.500px;height:1.500px;background:#cfcfcf"></div>
<!-- row4: pen / text -->
<svg style="left:822px;top:110px" width="12" height="12" viewBox="0 0 12 12"><path d="M0.500 11.500L2 6 6.500 2.500 9.500 5.500 6 10z" fill="#dcdcdc"/><path d="M7.500 1.500L9 0 12 3 10.500 4.500z" fill="#dcdcdc"/><circle cx="4.800" cy="7.200" r="1" fill="#464646"/></svg>
<div class="a" style="left:835.500px;top:122px;width:1.500px;height:1.500px;background:#cfcfcf"></div>
<div class="a" style="left:844px;top:108.500px;font-family:'Liberation Serif',serif;font-size:15px;line-height:15px;color:#dcdcdc">T</div>
<!-- row5: line / rect -->
<svg style="left:822.500px;top:129.500px" width="11" height="11" viewBox="0 0 11 11"><path d="M0.500 10.500L10.500 0.500" stroke="#dcdcdc" stroke-width="1.100"/></svg>
<div class="a" style="left:844.500px;top:130.500px;width:10px;height:8.500px;background:#8e8e8e;border:1px solid #bdbdbd"></div>
<div class="a" style="left:857px;top:141px;width:1.500px;height:1.500px;background:#cfcfcf"></div>
<!-- row6: oval / polystar -->
<div class="a" style="left:822.500px;top:149.500px;width:11px;height:8.500px;border-radius:50%;background:#8e8e8e;border:1px solid #c4c4c4"></div>
<div class="a" style="left:835.500px;top:159.500px;width:1.500px;height:1.500px;background:#cfcfcf"></div>
<svg style="left:844px;top:148.500px" width="11" height="10" viewBox="0 0 11 10"><path d="M3 0.700h5L10.500 5 8 9.300H3L0.500 5z" fill="#7c7c7c" stroke="#cfcfcf" stroke-width="1.200"/></svg>
<!-- row7: pencil / brush -->
<svg style="left:822px;top:167.500px" width="11" height="11" viewBox="0 0 11 11"><path d="M0.500 10.500L1.500 7.500 7.500 1.500 9.500 3.500 3.500 9.500z" fill="#cfcfcf"/><path d="M8.300 0.800L9.300 0 11 1.700 10.200 2.700z" fill="#cfcfcf"/></svg>
<svg style="left:843.500px;top:167px" width="13" height="12" viewBox="0 0 13 12"><path d="M12.500 0.500L6.500 7" stroke="#d6d6d6" stroke-width="1.600"/><path d="M6.800 6Q8 9.500 4.500 10.500Q1 11 1.500 8Q2.500 5.500 4.500 7" fill="none" stroke="#d6d6d6" stroke-width="1.400"/></svg>
<!-- row8: paint brush -->
<svg style="left:822px;top:185px" width="12" height="12" viewBox="0 0 12 12"><path d="M11.500 0.500L5.500 7.500" stroke="#d6d6d6" stroke-width="1.600"/><path d="M5.800 6.800L4 9.800Q1.500 11.800 0.500 10.500Q2 9.500 2.500 7.800z" fill="#d6d6d6"/></svg>
<!-- row9: bone / paint bucket -->
<svg style="left:822.500px;top:208px" width="11" height="11" viewBox="0 0 11 11"><path d="M2.500 8.500L8.500 2.500" stroke="#dcdcdc" stroke-width="2"/><circle cx="1.800" cy="7.600" r="1.500" fill="#dcdcdc"/><circle cx="3.200" cy="9.200" r="1.500" fill="#dcdcdc"/><circle cx="7.800" cy="1.800" r="1.500" fill="#dcdcdc"/><circle cx="9.200" cy="3.400" r="1.500" fill="#dcdcdc"/></svg>
<div class="a" style="left:835.500px;top:219px;width:1.500px;height:1.500px;background:#cfcfcf"></div>
<svg style="left:844px;top:206.500px" width="12" height="13" viewBox="0 0 12 13"><path d="M2 5.500L7.500 3 9.500 10 3.500 12.500z" fill="#cfcfcf"/><path d="M3.500 5Q3 0.800 5 0.800Q7 0.800 7 4" fill="none" stroke="#cfcfcf" stroke-width="1.100"/><path d="M9.500 5.500Q11.500 7 11 9.500" stroke="#cfcfcf" stroke-width="1.300" fill="none"/></svg>
<!-- row10: ink bottle / eyedropper -->
<svg style="left:821.500px;top:225.500px" width="14" height="13" viewBox="0 0 14 13"><path d="M1 6L5 3.500 7.500 9 2.500 11z" fill="#cfcfcf"/><path d="M2.500 5Q2 1 3.800 1Q5.500 1 5.300 3.500" fill="none" stroke="#cfcfcf" stroke-width="1"/><path d="M8 8h4.500v4.500H8z" fill="none" stroke="#e0e0e0" stroke-width="1.100"/></svg>
<svg style="left:844.500px;top:226px" width="11" height="12" viewBox="0 0 11 12"><path d="M0.500 11.500L1.200 9 6 4.200 7.600 5.800 2.800 10.600z" fill="#cfcfcf"/><path d="M5.800 3L8 0.800Q9.500-0.200 10.500 1Q11.300 2.300 10 3.500L8 5.500z" fill="#cfcfcf"/></svg>
<!-- row11: eraser / width -->
<svg style="left:822px;top:245px" width="13" height="10" viewBox="0 0 13 10"><path d="M0.500 6L7 0.800 12.500 2.500 6 8z" fill="#d6d6d6"/><path d="M0.500 6.500V8L6 9.800 12.500 4.500V3L6 8.300z" fill="#a8a8a8"/></svg>
<svg style="left:844px;top:244.500px" width="13" height="11" viewBox="0 0 13 11"><path d="M0.500 10Q2 3 3.500 6Q5 9.500 6.500 6Q8 2.500 9.500 6Q11 9 12.500 5" fill="none" stroke="#d6d6d6" stroke-width="1.200"/><path d="M3 1.500l2 2.500M5.500 0.500l0.500 3" stroke="#d6d6d6" stroke-width="1"/></svg>
<!-- row12: camera / hand -->
<svg style="left:822px;top:267px" width="13" height="9" viewBox="0 0 13 9"><path d="M0 0.500h8v8H0z M8.500 4.500L12.500 1.500v6z" fill="#cfcfcf"/></svg>
<svg style="left:844px;top:264.500px" width="12" height="13" viewBox="0 0 12 13"><path d="M3 12.500L0.500 7.500Q0.300 6.200 1.800 6.800L3 8.500V2Q3.700 1 4.400 2V6.500V1Q5.200 0 6 1V6.500V1.500Q6.800 0.600 7.500 1.500V6.800V3Q8.300 2.200 9 3V9.500L8 12.500z" fill="#d6d6d6"/></svg>
<div class="a" style="left:857px;top:277px;width:1.500px;height:1.500px;background:#cfcfcf"></div>
<!-- row13: zoom -->
<svg style="left:823px;top:284.500px" width="11" height="11" viewBox="0 0 11 11"><circle cx="4.200" cy="4.200" r="3.200" fill="#8a8a8a" stroke="#d6d6d6" stroke-width="1.300"/><path d="M6.800 6.800L10.500 10.500" stroke="#d6d6d6" stroke-width="1.800"/></svg>
<!-- stroke/fill colours -->
<svg style="left:826.500px;top:309.500px" width="9" height="9" viewBox="0 0 9 9"><path d="M0.500 8.500L1.200 6.200 5.800 1.600 7.400 3.200 2.800 7.800z M6.400 1L7.400 0 9 1.600 8 2.600z" fill="#e4e4e4"/></svg>
<div class="a" style="left:840px;top:308px;width:12.700px;height:12px;background:#000;border:1px solid #262626"></div>
<div class="a" style="left:825px;top:326px;width:12.700px;height:12.500px;background:#353535;border:1px solid #1e1e1e;box-shadow:0 0 0 0.500px #5c5c5c"></div>
<svg style="left:827px;top:328px" width="9" height="9" viewBox="0 0 9 9"><path d="M2.500 0.500C4.500-0.200 5 2.700 4.200 3.600L8 5.800Q8.800 8.500 7 8.500H1Q0 8.200 0.800 6L3 4.200C2.500 3 1.700 1.500 2.500 0.500z" fill="#e6e6e6"/></svg>
<div class="a" style="left:840px;top:326px;width:12.700px;height:12.500px;background:#000;border:1px solid #262626"></div>
<div class="a" style="left:827.500px;top:345.500px;width:5px;height:5px;background:#000;border:1px solid #e8e8e8"></div>
<div class="a" style="left:830px;top:348px;width:3.500px;height:3.500px;background:#fff"></div>
<div class="a" style="left:838.500px;top:345.500px;width:3.500px;height:4px;background:#f2f2f2"></div>
<div class="a" style="left:840px;top:348px;width:3.500px;height:4px;background:#1a1a1a;border:0.500px solid #f2f2f2"></div>
<div class="rt" style="left:843.500px;top:346.500px;border-left-color:#f2f2f2;border-top-width:2.500px;border-bottom-width:2.500px;border-left-width:3px"></div>
<!-- options -->
<div class="a" style="left:818.500px;top:361.500px;width:19px;height:16.500px;background:#2e2e2e;border:1px solid #1c1c1c;box-shadow:0 0 0 0.500px #5a5a5a"></div>
<svg style="left:823.500px;top:365px" width="9" height="9" viewBox="0 0 9 9"><path d="M1.500 8.500V4.500a3 3 0 0 1 6 0V8.500" fill="none" stroke="#ececec" stroke-width="2"/></svg>
<svg style="left:843.500px;top:364.500px" width="10" height="10" viewBox="0 0 10 10"><path d="M0.500 4h6v5.500h-6z M0.500 4L3 2h6L6.500 4 M9 2v5.500L6.500 9.500" fill="none" stroke="#6a6a6a" stroke-width="0.900"/><path d="M7 0v3" stroke="#6a6a6a" stroke-width="0.900"/></svg>
<svg style="left:822.500px;top:384.500px" width="10" height="10" viewBox="0 0 10 10"><path d="M0.500 3.500h6.500v6h-6.500z M2.500 0.500h7v6h-2.500" fill="none" stroke="#686868" stroke-width="0.900"/></svg>
<svg style="left:843.500px;top:384.500px" width="10" height="10" viewBox="0 0 10 10"><path d="M0.500 4h6v5.500h-6z M0.500 4L3 2h6L6.500 4 M9 2v5.500L6.500 9.500" fill="none" stroke="#686868" stroke-width="0.900"/></svg>

<!-- ===== DIALOG ===== -->
<div class="a" id="dlg" style="left:313.8px;top:161.4px;width:235.8px;height:163.9px;background:#fc70b2"></div>
<div class="a" style="left:319.2px;top:182.5px;width:225.2px;height:136.9px;background:#454545"></div>
<div class="a" style="left:313.8px;top:165px;width:236.2px;height:13px;text-align:center;font-size:9.700px;line-height:13px;color:#8f2862">导出 <span style="font-size:9px;letter-spacing:-0.500px">JPEG</span></div>
<div class="a" style="left:526px;top:162px;width:19px;height:13px;background:#de5048"></div>
<svg style="left:532.5px;top:165.5px" width="6" height="6" viewBox="0 0 6 6"><path d="M0.500 0.500l5 5M5.500 0.500l-5 5" stroke="#fff" stroke-width="1.300"/></svg>

<div class="t" style="left:321px;top:193px;font-size:8px;width:40px;text-align:right">宽<i>(W):</i></div>
<div class="a" style="left:364.2px;top:193px;width:41px;height:12px;background:#a8a8a8;border:1px solid #2c2c2c"></div>
<div class="t" style="left:367px;top:193px;font-size:7.500px;color:#2a2a2a">5333</div>
<div class="t" style="left:409.5px;top:193px;font-size:8px">像素</div>
<div class="t" style="left:321px;top:214px;font-size:8px;width:40px;text-align:right">高<i>(T):</i></div>
<div class="a" style="left:364.2px;top:214px;width:41px;height:12px;background:#a8a8a8;border:1px solid #2c2c2c"></div>
<div class="t" style="left:367px;top:214px;font-size:7.500px;color:#2a2a2a">3000</div>
<div class="t" style="left:409.5px;top:214px;font-size:8px">像素</div>
<div class="t" style="left:311px;top:235.500px;font-size:8px;width:50px;text-align:right">分辨率<i> (R):</i></div>
<div class="a" style="left:364.2px;top:234px;width:41.5px;height:13px;background:#a8a8a8;border:1px solid #b98a34;box-shadow:0 0 0 0.500px #6a5020"></div>
<div class="a" style="left:367.5px;top:236.500px;width:12.500px;height:8px;background:#3b8fe8"></div>
<div class="t" style="left:368px;top:234.500px;font-size:7px;color:#fff">300</div>
<div class="t" style="left:406.5px;top:235px;font-size:8px;color:#c4c4c4">dpi</div>
<div class="btn" style="left:428.2px;top:234.6px;width:60.2px;height:12px;font-size:8px;line-height:10px">匹配屏幕<i style="font-style:normal;font-size:7.500px"> (M)</i></div>
<div class="t" style="left:321px;top:256.500px;font-size:8px;width:40px;text-align:right">包含<i> (C):</i></div>
<div class="sel" style="left:364.2px;top:256px;width:71.200px;height:11.500px"></div>
<div class="t" style="left:368px;top:255.500px;font-size:8px">完整文档大小</div>
<div class="dn" style="left:427.500px;top:260.500px;border-left-width:2.500px;border-right-width:2.500px;border-top-width:3.500px"></div>
<div class="t" style="left:321px;top:276.500px;font-size:8px;width:40.500px;text-align:right">品质:</div>
<div class="t or" style="left:365.800px;top:276px;font-size:7.500px"><span class="ul">100</span></div>
<div class="t" style="left:321px;top:294.500px;font-size:8px;width:41.500px;text-align:right">选项:</div>
<div class="chk" style="left:366.500px;top:296.500px"></div>
<div class="t" style="left:376.500px;top:294.500px;font-size:8px">渐进式显示<i>(P)</i></div>
<svg style="left:342.5px;top:230.500px" width="5" height="6" viewBox="0 0 5 6"><path d="M0.500 0.500h4L2.500 3.500z M2.500 3.500V6" fill="none" stroke="#e8e8e8" stroke-width="0.800"/></svg>
<div class="btn" style="left:495.5px;top:192px;width:42.300px;height:13px;font-size:8px;line-height:11px;border-color:#1a1a1a;box-shadow:inset 0 0 0 1px #757575">确定</div>
<div class="btn" style="left:496.3px;top:213.400px;width:40.700px;height:12px;font-size:8px;line-height:10px">取消</div>

</div>
</body>
</html>
